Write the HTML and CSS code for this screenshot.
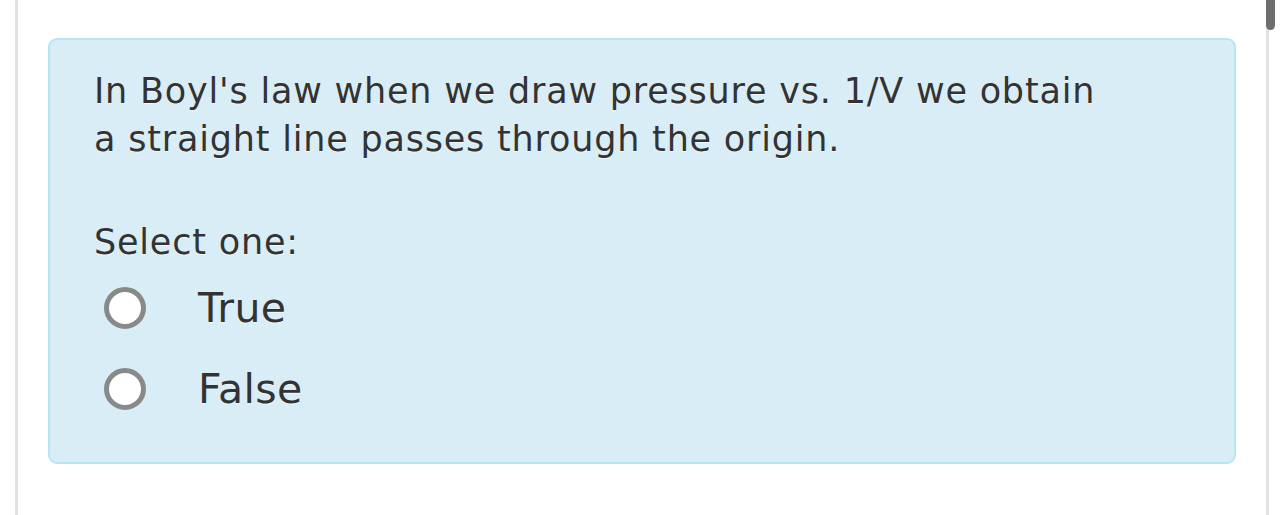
FILE: index.html
```html
<!DOCTYPE html>
<html lang="en">
<head>
  <meta charset="UTF-8">
  <meta name="viewport" content="width=device-width, initial-scale=1.0">
  <title>Question</title>
  <link rel="stylesheet" href="styles.css">
</head>
<body>
  <div class="page">
    <div class="scroll-thumb"></div>

    <div class="question">
      <div class="qtext">
        In Boyl's law when we draw pressure vs. 1/V we obtain<br>
        a straight line passes through the origin.
      </div>

      <div class="prompt">Select one:</div>

      <div class="answers">
        <label class="answer">
          <input type="radio" name="q1" value="1">
          <span>True</span>
        </label>
        <label class="answer">
          <input type="radio" name="q1" value="0">
          <span>False</span>
        </label>
      </div>
    </div>
  </div>
</body>
</html>
```

FILE: styles.css
```css
body {
  font-family: 'DejaVu Sans', Verdana, sans-serif;
  margin: 0;
  padding: 0;
  background-color: #fff;
  color: #333;
}
.page {
  position: relative;
  margin-left: 15px;
  width: 1254px;
  min-height: 515px;
  border-left: 3px solid #e2e2e2;
  border-right: 3px solid #e2e2e2;
  padding: 38px 30px 0;
  box-sizing: border-box;
}
.scroll-thumb {
  position: absolute;
  top: 0;
  right: -9px;
  width: 9px;
  height: 30px;
  background-color: #6e6e6e;
  border-radius: 0 0 5px 5px;
}
.question {
  background-color: #d9edf7;
  border: 2px solid #b8e6f0;
  border-radius: 9px;
  padding: 27px 44px 33px;
  text-shadow: 0 1px 0 rgba(255,255,255,.6);
  letter-spacing: 0.8px;
}
.qtext {
  font-size: 35px;
  line-height: 48px;
}
.prompt {
  font-size: 35px;
  line-height: 48px;
  margin-top: 55px;
}
.answers {
  margin-top: 1px;
}
.answer {
  display: flex;
  align-items: center;
  height: 81px;
  font-size: 41px;
  letter-spacing: 0.3px;
}
.answer input {
  appearance: none;
  -webkit-appearance: none;
  width: 42px;
  height: 42px;
  margin: 0 52px 0 10px;
  border: 5px solid #898989;
  border-radius: 50%;
  background-color: #fff;
  box-sizing: border-box;
}
```
